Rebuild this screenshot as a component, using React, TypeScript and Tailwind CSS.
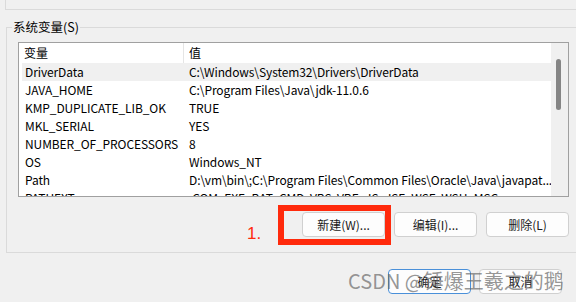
const rows = [
  { name: "DriverData", value: "C:\\Windows\\System32\\Drivers\\DriverData", selected: true },
  { name: "JAVA_HOME", value: "C:\\Program Files\\Java\\jdk-11.0.6" },
  { name: "KMP_DUPLICATE_LIB_OK", value: "TRUE" },
  { name: "MKL_SERIAL", value: "YES" },
  { name: "NUMBER_OF_PROCESSORS", value: "8" },
  { name: "OS", value: "Windows_NT" },
  { name: "Path", value: "D:\\vm\\bin\\;C:\\Program Files\\Common Files\\Oracle\\Java\\javapat..." },
  { name: "PATHEXT", value: ".COM;.EXE;.BAT;.CMD;.VBS;.VBE;.JS;.JSE;.WSF;.WSH;.MSC" },
];

const font = "font-['Noto_Sans_CJK_SC','Noto_Sans',sans-serif]";

function Button({ label, primary }: { label: string; primary?: boolean }) {
  return (
    <div
      className={`flex items-center justify-center rounded-[4px] border bg-[#fdfdfd] text-[12px] leading-none text-[#1a1a1a] ${
        primary ? "border-[#4a90d9]" : "border-[#d0d0d0]"
      }`}
      style={{ width: 83, height: 25 }}
    >
      {label}
    </div>
  );
}

export default function App() {
  return (
    <div className={`relative h-[306px] w-[576px] overflow-hidden bg-white ${font}`}>
      <div className="flex h-[302px] flex-col bg-[#f0f0f0]">
        {/* bottom corner of the group above */}
        <div className="ml-[5px] h-[10px] border-b border-l border-[#dadada]" />

        <fieldset className="ml-[6px] mt-[9px] h-[234px] w-[620px] shrink-0 border border-[#dadada]">
          <legend className="ml-[5px] px-[1px] text-[12.5px] leading-[16px] text-black">
            系统变量(S)
          </legend>

          <div className="ml-[11px] mt-[7px] flex h-[155px] w-[551px] border border-[#a0a0a0] bg-white">
            <div className="w-[532px] overflow-hidden text-[12px] tracking-[-0.1px] text-black">
              <div className="flex h-[20px] items-center">
                <div className="flex h-full w-[165px] items-center border-r border-[#e5e5e5] pl-[5px]">
                  变量
                </div>
                <div className="pl-[5px]">值</div>
              </div>
              {rows.map((r) => (
                <div
                  key={r.name}
                  className={`ml-[3px] flex h-[18px] items-center whitespace-nowrap ${
                    r.selected ? "bg-[#f0f0f0]" : ""
                  }`}
                >
                  <div className="w-[167px] shrink-0 pl-[3px]">{r.name}</div>
                  <div>{r.value}</div>
                </div>
              ))}
            </div>
            <div className="w-[17px] bg-[#f0f0f0] pl-[5px] pt-[16px]">
              <div className="h-[51px] w-[5px] rounded-full bg-[#858585]" />
            </div>
          </div>

          <div className="ml-[11px] mt-[15px] flex w-[551px] justify-end gap-[9px]">
            <Button label="新建(W)..." />
            <Button label="编辑(I)..." />
            <Button label="删除(L)" />
          </div>
        </fieldset>

        <div className="mt-[16px] flex justify-end gap-[8px] pr-[14px]">
          <Button label="确定" primary />
          <Button label="取消" />
        </div>
      </div>

      {/* annotation drawn over the screenshot */}
      <div className="absolute left-[278px] top-[205px] h-[40px] w-[113px] border-[6px] border-[#ff2a0c]" />
      <div className="absolute left-[247px] top-[224px] font-['Liberation_Sans',sans-serif] text-[17px] leading-[20px] text-[#ff2a0c]">
        1.
      </div>

      {/* watermark */}
      <div className="absolute left-[348px] top-[268px] whitespace-nowrap text-[20px] leading-[26px] text-[rgba(105,105,105,0.7)]">
        CSDN @锤爆王羲之的鹅
      </div>
    </div>
  );
}
